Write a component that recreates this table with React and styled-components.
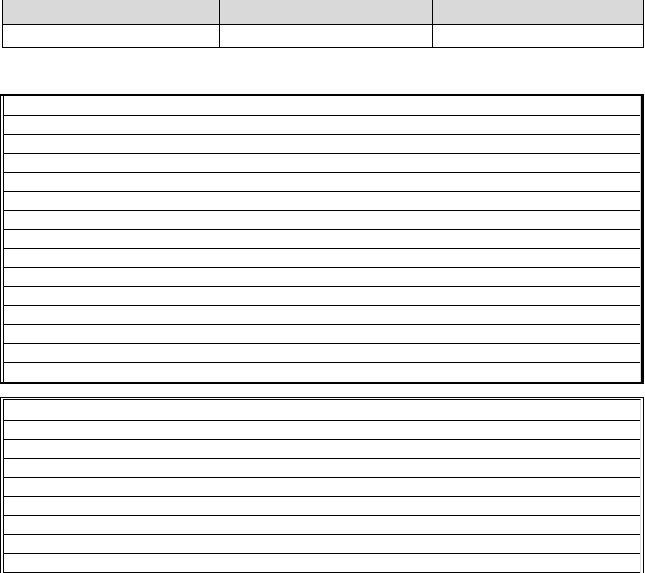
import React from "react";
import styled, { createGlobalStyle } from "styled-components";

const GlobalStyle = createGlobalStyle`
  html, body {
    margin: 0;
    padding: 0;
    background: #fff;
    overflow: hidden;
    font-family: "Liberation Sans", Arial, sans-serif;
    font-size: 12px;
  }
`;

const Page = styled.div`
  width: 645px;
  display: flex;
  flex-direction: column;
`;

const InfoTable = styled.div`
  margin-left: 2px;
  width: 642px;
  box-sizing: border-box;
  border-left: 1px solid #000;
  border-right: 1px solid #000;
  display: grid;
  grid-template-columns: 217px 213px 1fr;
`;

const InfoCell = styled.div`
  box-sizing: border-box;
  height: ${({ head }) => (head ? "25px" : "23px")};
  background: ${({ head }) => (head ? "#d9d9d9" : "#fff")};
  border-bottom: 1px solid #000;
  border-right: ${({ last }) => (last ? "none" : "1px solid #000")};
`;

const Frame = styled.div`
  box-sizing: border-box;
  width: 644px;
  margin-top: ${({ gap }) => gap}px;
  border-left: 1px solid #000;
  padding-left: 2px;
  ${({ heavy }) =>
    heavy
      ? `
    border-top: 2px solid #000;
    border-right: 3px solid #000;
    border-bottom: 2px solid #000;
  `
      : `
    border-top: 1px solid #000;
    padding-top: 1px;
    border-right: 1px solid #000;
    padding-right: 2px;
  `}
`;

const Rows = styled.div`
  border-left: 1px solid #000;
  border-right: 1px solid #dcdcdc;
  ${({ topLine }) => topLine && `border-top: 1px solid #000;`}
  display: flex;
  flex-direction: column;
`;

const Row = styled.div`
  height: ${({ h }) => h}px;
  border-bottom: ${({ last }) => (last ? "none" : "1px solid #000")};
`;

const bigRows = Array.from({ length: 15 }, (_, i) => (i === 0 || i === 14 ? 19 : 18));
const lowerRows = Array.from({ length: 9 }, (_, i) => (i === 0 ? 20 : 18));

const App = () => {
  return (
    <Page>
      <GlobalStyle />
      <InfoTable>
        <InfoCell head />
        <InfoCell head />
        <InfoCell head last />
        <InfoCell />
        <InfoCell />
        <InfoCell last />
      </InfoTable>
      <Frame heavy gap={46}>
        <Rows>
          {bigRows.map((h, i) => (
            <Row key={i} h={h} last={i === bigRows.length - 1} />
          ))}
        </Rows>
      </Frame>
      <Frame gap={13}>
        <Rows topLine>
          {lowerRows.map((h, i) => (
            <Row key={i} h={h} />
          ))}
        </Rows>
      </Frame>
    </Page>
  );
};

export default App;
